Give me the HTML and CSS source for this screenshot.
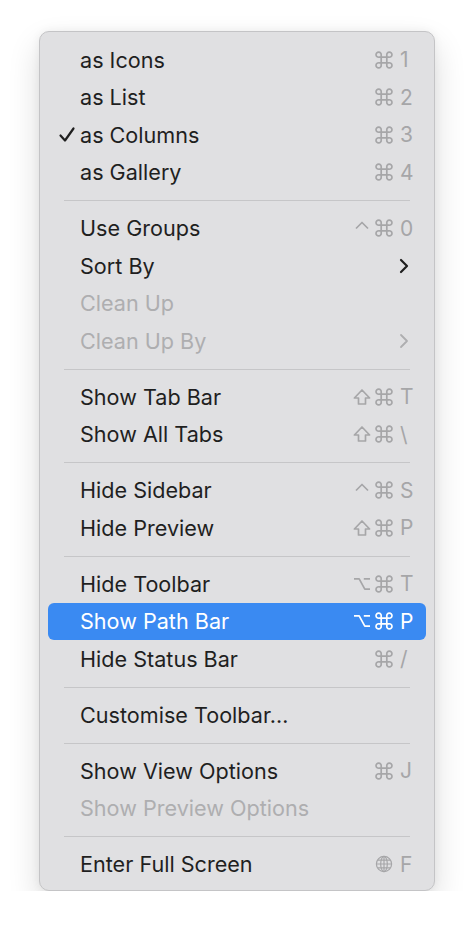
FILE: index.html
```html
<!DOCTYPE html>
<html lang="en">
<head>
	<meta charset="UTF-8">
	<title>View menu</title>
	<link rel="stylesheet" href="styles.css">
</head>
<body>
<svg class="defs">
	<symbol id="cmd" viewBox="0 0 18 18"><path d="M6.2 6.2 V4 A2.6 2.6 0 1 0 4 6.2 H14 A2.6 2.6 0 1 0 11.8 4 V14 A2.6 2.6 0 1 0 14 11.8 H4 A2.6 2.6 0 1 0 6.2 14 Z" /></symbol>
	<symbol id="shift" viewBox="0 0 18 18"><path d="M9 2 L16.6 10 H12.5 V16 H5.5 V10 H1.4 Z" /></symbol>
	<symbol id="opt" viewBox="0 0 18 18"><path d="M1 3.8 H6.2 L11.8 14.2 H17 M10.8 3.8 H17" /></symbol>
	<symbol id="ctrl" viewBox="0 0 18 18"><path d="M3 9.5 L9 3.5 L15 9.5" /></symbol>
	<symbol id="globe" viewBox="0 0 18 18">
		<circle cx="9" cy="9" r="7.6" />
		<ellipse cx="9" cy="9" rx="3.3" ry="7.6" />
		<path d="M9 1.4 V16.6 M1.4 9 H16.6 M2.6 5.1 H15.4 M2.6 12.9 H15.4" />
	</symbol>
</svg>
<div class="menu">
	<div class="item"><span class="label">as Icons</span><span class="keys"><span class="mods"><svg><use href="#cmd"/></svg></span><span class="key">1</span></span></div>
	<div class="item"><span class="label">as List</span><span class="keys"><span class="mods"><svg><use href="#cmd"/></svg></span><span class="key">2</span></span></div>
	<div class="item">
		<svg class="check" viewBox="0 0 18 18"><path d="M2.5 9.5 L7 14.5 L15.5 2.5" /></svg>
		<span class="label">as Columns</span><span class="keys"><span class="mods"><svg><use href="#cmd"/></svg></span><span class="key">3</span></span>
	</div>
	<div class="item"><span class="label">as Gallery</span><span class="keys"><span class="mods"><svg><use href="#cmd"/></svg></span><span class="key">4</span></span></div>
	<div class="sep"></div>
	<div class="item"><span class="label">Use Groups</span><span class="keys"><span class="mods"><svg><use href="#ctrl"/></svg><svg><use href="#cmd"/></svg></span><span class="key">0</span></span></div>
	<div class="item">
		<span class="label">Sort By</span>
		<svg class="arrow" viewBox="0 0 12 16"><path d="M3 2 L9 8 L3 14" /></svg>
	</div>
	<div class="item off"><span class="label">Clean Up</span></div>
	<div class="item off">
		<span class="label">Clean Up By</span>
		<svg class="arrow" viewBox="0 0 12 16"><path d="M3 2 L9 8 L3 14" /></svg>
	</div>
	<div class="sep"></div>
	<div class="item"><span class="label">Show Tab Bar</span><span class="keys"><span class="mods"><svg><use href="#shift"/></svg><svg><use href="#cmd"/></svg></span><span class="key">T</span></span></div>
	<div class="item"><span class="label">Show All Tabs</span><span class="keys"><span class="mods"><svg><use href="#shift"/></svg><svg><use href="#cmd"/></svg></span><span class="key">\</span></span></div>
	<div class="sep"></div>
	<div class="item"><span class="label">Hide Sidebar</span><span class="keys"><span class="mods"><svg><use href="#ctrl"/></svg><svg><use href="#cmd"/></svg></span><span class="key">S</span></span></div>
	<div class="item"><span class="label">Hide Preview</span><span class="keys"><span class="mods"><svg><use href="#shift"/></svg><svg><use href="#cmd"/></svg></span><span class="key">P</span></span></div>
	<div class="sep"></div>
	<div class="item"><span class="label">Hide Toolbar</span><span class="keys"><span class="mods"><svg><use href="#opt"/></svg><svg><use href="#cmd"/></svg></span><span class="key">T</span></span></div>
	<div class="item active"><span class="label">Show Path Bar</span><span class="keys"><span class="mods"><svg><use href="#opt"/></svg><svg><use href="#cmd"/></svg></span><span class="key">P</span></span></div>
	<div class="item"><span class="label">Hide Status Bar</span><span class="keys"><span class="mods"><svg><use href="#cmd"/></svg></span><span class="key">/</span></span></div>
	<div class="sep"></div>
	<div class="item"><span class="label">Customise Toolbar…</span></div>
	<div class="sep"></div>
	<div class="item"><span class="label">Show View Options</span><span class="keys"><span class="mods"><svg><use href="#cmd"/></svg></span><span class="key">J</span></span></div>
	<div class="item off"><span class="label">Show Preview Options</span></div>
	<div class="sep"></div>
	<div class="item"><span class="label">Enter Full Screen</span><span class="keys"><span class="mods"><svg class="thin"><use href="#globe"/></svg></span><span class="key">F</span></span></div>
</div>
</body>
</html>
```

FILE: styles.css
```css
*{
	padding: 0;
	margin: 0;
	box-sizing: border-box;
}
body{
	background-color: #fff;
	font-family: Inter, "Noto Sans", sans-serif;
}
.defs{
	display: none;
}
.menu{
	width: 396px;
	margin: 31px 0 0 39px;
	padding: 9px 0 7px;
	background-color: #e0e0e2;
	border: 1px solid #c4c4c6;
	border-radius: 10px;
	box-shadow: 0 14px 32px rgba(0,0,0,0.14), 0 0 10px rgba(0,0,0,0.06);
}
.item{
	height: 37.5px;
	margin: 0 8px;
	padding: 0 14px 0 32px;
	display: flex;
	align-items: center;
	position: relative;
	border-radius: 6px;
	color: #1f1f1f;
	font-size: 21.6px;
}
.label{
	flex: 1;
}
.off{
	color: #aeaeb0;
}
.active{
	background-color: #3a8af2;
	color: #fff;
}
.check{
	position: absolute;
	left: 10px;
	top: 10px;
	width: 18px;
	height: 18px;
	fill: none;
	stroke: #1f1f1f;
	stroke-width: 2.2;
	stroke-linecap: round;
	stroke-linejoin: round;
}
.keys{
	display: flex;
	align-items: center;
	color: #a6a6a8;
}
.active .keys{
	color: #fff;
}
.mods{
	display: flex;
	align-items: center;
	gap: 4px;
}
.mods svg{
	width: 18px;
	height: 18px;
	fill: none;
	stroke: currentColor;
	stroke-width: 1.7;
	stroke-linejoin: round;
}
.mods svg.thin{
	stroke-width: 1.2;
}
.key{
	width: 12px;
	margin-left: 7px;
	font-size: 21px;
}
.arrow{
	width: 12px;
	height: 16px;
	margin-right: 2px;
	fill: none;
	stroke: #1f1f1f;
	stroke-width: 2.2;
	stroke-linecap: round;
	stroke-linejoin: round;
}
.off .arrow{
	stroke: #aeaeb0;
	stroke-width: 1.8;
}
.sep{
	height: 1px;
	margin: 9px 24px 8.5px;
	background-color: #c6c6c8;
}
```
